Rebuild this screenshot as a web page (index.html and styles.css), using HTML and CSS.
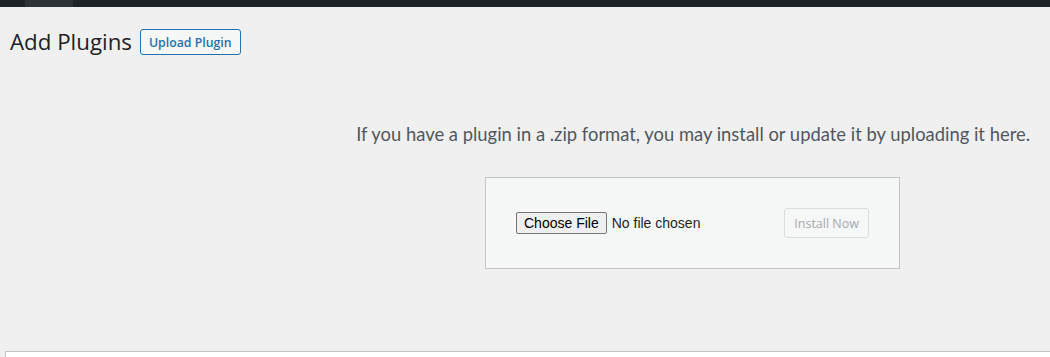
FILE: index.html
```html
<!DOCTYPE html>
<html lang="en">
<head>
    <meta charset="UTF-8">
    <meta name="viewport" content="width=device-width, initial-scale=1.0">
    <title>Add Plugins</title>
    <link rel="stylesheet" href="styles.css">
</head>
<body>
    <div class="admin-bar">
        <div class="admin-bar-item"></div>
    </div>
    <div class="wrap">
        <div class="page-title-row">
            <h1 class="page-title">Add Plugins</h1>
            <a class="page-title-action" href="#">Upload Plugin</a>
        </div>
        <div class="upload-plugin">
            <p class="install-help">If you have a plugin in a .zip format, you may install or update it by uploading it here.</p>
            <form class="upload-form">
                <div class="file-picker">
                    <button type="button" class="file-button">Choose File</button>
                    <span class="file-name">No file chosen</span>
                </div>
                <button type="button" class="install-button" disabled>Install Now</button>
            </form>
        </div>
        <div class="list-panel"></div>
    </div>
</body>
</html>
```

FILE: styles.css
```css
/* Reset */
* {
    margin: 0;
    padding: 0;
    box-sizing: border-box;
}
body {
    font-family: 'Open Sans', 'Noto Sans', sans-serif;
    background-color: #f0f0f1;
    color: #1d2327;
    height: 357px;
    overflow: hidden;
}
/* Admin bar (bottom edge only) */
.admin-bar {
    height: 7px;
    background-color: #1d2327;
    padding-left: 25px;
}
.admin-bar-item {
    width: 48px;
    height: 7px;
    background-color: #2c3338;
}
/* Page */
.wrap {
    padding: 0 20px 0 10px;
}
.page-title-row {
    display: flex;
    align-items: center;
    margin-top: 22px;
}
.page-title {
    font-size: 22.3px;
    font-weight: 400;
    line-height: 26px;
    color: #1d2327;
}
.page-title-action {
    margin-left: 8px;
    height: 26px;
    padding: 0 8px;
    display: flex;
    align-items: center;
    border: 1px solid #2271b1;
    border-radius: 3px;
    background-color: #f6f7f7;
    color: #2271b1;
    font-size: 12.3px;
    font-weight: 600;
    text-decoration: none;
}
/* Upload section */
.upload-plugin {
    display: flex;
    flex-direction: column;
    align-items: flex-end;
    padding-top: 67px;
}
.install-help {
    font-family: 'Lato', sans-serif;
    font-size: 18.4px;
    line-height: 24px;
    color: #50575e;
}
.upload-form {
    margin: 31px 130px 0 0;
    width: 415px;
    padding: 30px;
    display: flex;
    justify-content: space-between;
    align-items: center;
    background-color: #f6f7f7;
    border: 1px solid #c3c4c7;
}
.file-picker {
    display: flex;
    align-items: center;
    gap: 5px;
    font-family: 'Liberation Sans', Arial, sans-serif;
    font-size: 14px;
}
.file-button {
    font-family: inherit;
    font-size: inherit;
    height: 22px;
    padding: 0 7px;
    color: #000;
    background-color: #efefef;
    border: 1px solid #767676;
    border-radius: 2px;
}
.file-name {
    color: #1d2327;
}
.install-button {
    font-family: 'Open Sans', sans-serif;
    font-size: 12.5px;
    height: 30px;
    padding: 0 9px;
    color: #a7aaad;
    background-color: #f6f7f7;
    border: 1px solid #dcdcde;
    border-radius: 3px;
}
/* List table edge */
.list-panel {
    margin: 82px -20px 0 -5px;
    height: 40px;
    background-color: #ffffff;
    border-top: 1px solid #c3c4c7;
    border-left: 1px solid #c3c4c7;
}
```
